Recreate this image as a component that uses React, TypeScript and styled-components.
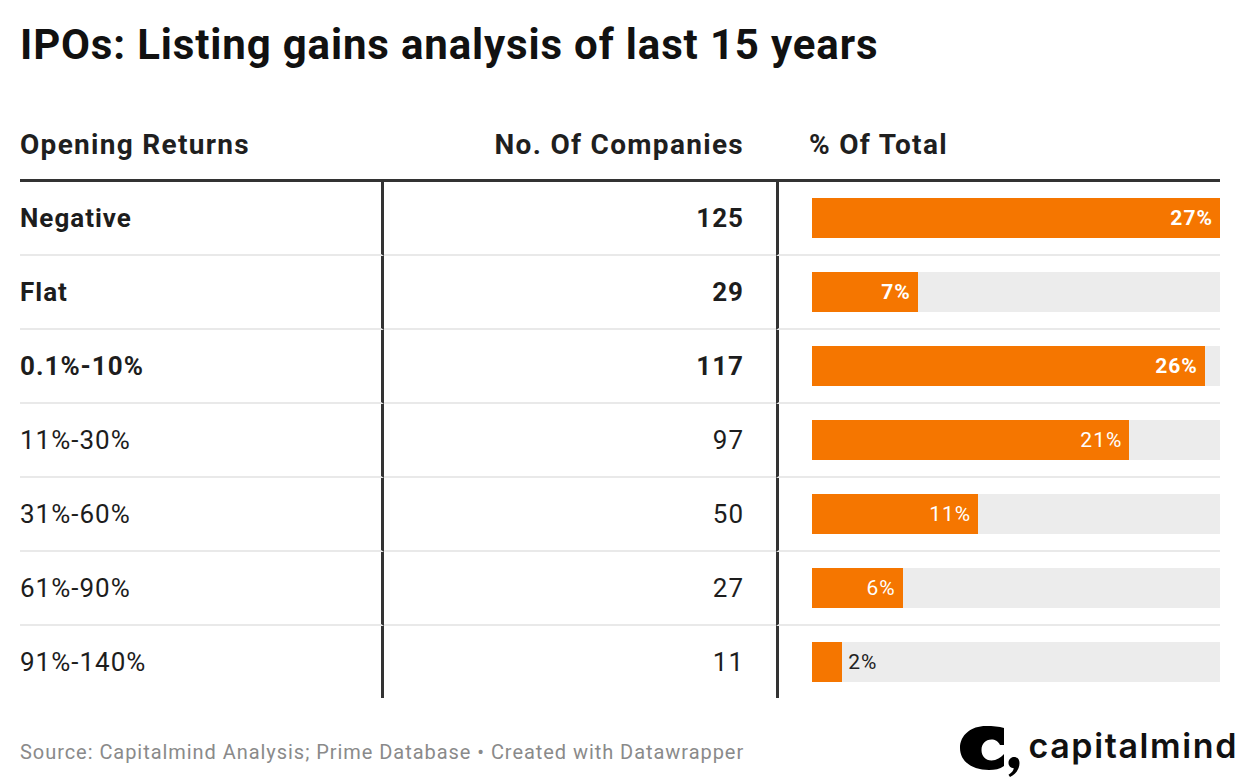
import React from 'react';
import styled, { createGlobalStyle } from 'styled-components';

const Global = createGlobalStyle`
  html, body { margin: 0; padding: 0; background: #ffffff; }
  body {
    font-family: Roboto, "Liberation Sans", Arial, sans-serif;
    color: #1d1d1d;
    letter-spacing: 1px;
  }
`;

type Row = { label: string; count: number; pct: number; bold?: boolean };

const rows: Row[] = [
  { label: 'Negative', count: 125, pct: 27, bold: true },
  { label: 'Flat', count: 29, pct: 7, bold: true },
  { label: '0.1%-10%', count: 117, pct: 26, bold: true },
  { label: '11%-30%', count: 97, pct: 21 },
  { label: '31%-60%', count: 50, pct: 11 },
  { label: '61%-90%', count: 27, pct: 6 },
  { label: '91%-140%', count: 11, pct: 2 },
];

const MAX = 27;

const Page = styled.div`
  width: 1240px;
  height: 784px;
  box-sizing: border-box;
  padding: 20px 20px 0 20px;
  overflow: hidden;
`;

const Title = styled.h1`
  margin: 0;
  font-size: 42px;
  line-height: 50px;
  font-weight: 700;
  color: #111111;
  letter-spacing: 0.85px;
`;

const Table = styled.div`
  margin-top: 58px;
  display: grid;
  grid-template-columns: 364px 392px 444px;
`;

const HeadCell = styled.div<{ $align?: 'left' | 'right' }>`
  font-size: 28px;
  line-height: 34px;
  font-weight: 700;
  color: #1f1f1f;
  letter-spacing: 1.3px;
  padding-bottom: 17px;
  border-bottom: 3px solid #333333;
  text-align: ${(p) => p.$align ?? 'left'};
  &:nth-child(2) { padding-right: 32px; }
  &:nth-child(3) { padding-left: 33px; }
`;

const Cell = styled.div<{ $bold?: boolean; $last?: boolean }>`
  height: 72px;
  display: flex;
  align-items: center;
  font-size: 26px;
  font-weight: ${(p) => (p.$bold ? 700 : 400)};
  color: #1d1d1d;
  border-bottom: ${(p) => (p.$last ? '0' : '2px solid #e9e9e9')};
`;

const LabelCell = styled(Cell)`
  border-right: 3px solid #333333;
`;

const CountCell = styled(Cell)`
  justify-content: flex-end;
  padding-right: 32px;
`;

const BarCell = styled(Cell)`
  border-left: 3px solid #333333;
  padding-left: 33px;
`;

const Track = styled.div`
  width: 408px;
  height: 40px;
  background: #ececec;
  display: flex;
`;

const Fill = styled.div`
  height: 100%;
  background: #f57600;
  display: flex;
  align-items: center;
  justify-content: flex-end;
  box-sizing: border-box;
  padding-right: 7px;
`;

const BarText = styled.span<{ $bold?: boolean; $inside?: boolean }>`
  font-size: 21px;
  font-weight: ${(p) => (p.$bold ? 700 : 400)};
  color: ${(p) => (p.$inside ? '#ffffff' : '#222222')};
  white-space: nowrap;
`;

const Outside = styled.div`
  display: flex;
  align-items: center;
  padding-left: 6px;
`;

const Footer = styled.div`
  display: flex;
  justify-content: space-between;
  align-items: center;
  margin-top: 28px;
  margin-right: -18px;
`;

const Source = styled.div`
  font-size: 20px;
  color: #8a8a8a;
  letter-spacing: 0.95px;
`;

const Logo = styled.div`
  display: flex;
  align-items: flex-start;
  height: 52px;
`;

const LogoText = styled.span`
  font-family: Inter, "Noto Sans", sans-serif;
  font-size: 34px;
  font-weight: 600;
  color: #111111;
  line-height: 40px;
  margin-left: 8px;
  letter-spacing: 1.6px;
`;

const Bar = ({ row }: { row: Row }) => {
  const w = (row.pct / MAX) * 408;
  const inside = w > 50;
  return (
    <Track>
      <Fill style={{ width: `${w}px` }}>
        {inside && (
          <BarText $bold={row.bold} $inside>
            {row.pct}%
          </BarText>
        )}
      </Fill>
      {!inside && (
        <Outside>
          <BarText $bold={row.bold}>{row.pct}%</BarText>
        </Outside>
      )}
    </Track>
  );
};

const Mark = () => (
  <svg width="62" height="52" viewBox="0 0 62 52" aria-hidden="true">
    <path
      d="M45,2 L45,19 L41,19 C39,15 36,13.5 32.5,13.5 C26.5,13.5 22.5,18 22.5,24 C22.5,30 26.5,34.5 32.5,34.5 C37.5,34.5 42,31.5 45,28 L45,40 C40.5,43 36,44 30,44 C14,44 1,36 1,22 C1,9 12,0 27,0 C34,0 40,0.5 45,2 Z"
      fill="#000"
    />
    <path
      d="M55,31 C58.5,31 60.5,33.5 60.5,37 C60.5,43 57,48 51,51 L49.5,48.8 C52.5,47 54.5,44.5 54.8,42.3 C51.8,42.2 49.5,40 49.5,36.8 C49.5,33.5 52,31 55,31 Z"
      fill="#000"
    />
  </svg>
);

export default function App() {
  return (
    <Page>
      <Global />
      <Title>IPOs: Listing gains analysis of last 15 years</Title>
      <Table>
        <HeadCell>Opening Returns</HeadCell>
        <HeadCell $align="right">No. Of Companies</HeadCell>
        <HeadCell>% Of Total</HeadCell>
        {rows.map((r, i) => {
          const last = i === rows.length - 1;
          return (
            <React.Fragment key={r.label}>
              <LabelCell $bold={r.bold} $last={last}>{r.label}</LabelCell>
              <CountCell $bold={r.bold} $last={last}>{r.count}</CountCell>
              <BarCell $last={last}>
                <Bar row={r} />
              </BarCell>
            </React.Fragment>
          );
        })}
      </Table>
      <Footer>
        <Source>Source: Capitalmind Analysis; Prime Database • Created with Datawrapper</Source>
        <Logo>
          <Mark />
          <LogoText>capitalmind</LogoText>
        </Logo>
      </Footer>
    </Page>
  );
}
